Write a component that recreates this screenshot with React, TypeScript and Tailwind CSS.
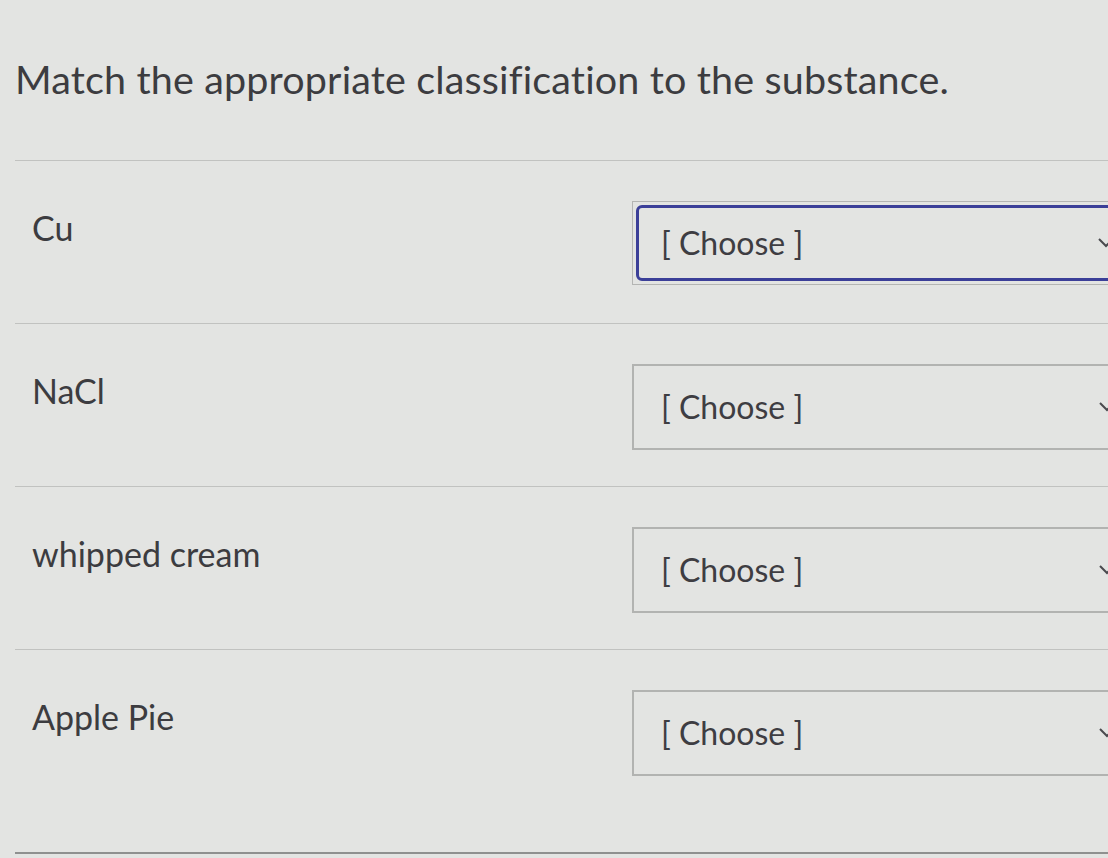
import React from 'react';

const rows = [
  { label: 'Cu', focused: true },
  { label: 'NaCl', focused: false },
  { label: 'whipped cream', focused: false },
  { label: 'Apple Pie', focused: false },
];

const Chevron = () => (
  <svg width="18" height="12" viewBox="0 0 18 12" fill="none" stroke="#4a4a4e" strokeWidth="2">
    <path d="M2 2l7 7 7-7" />
  </svg>
);

export default function App() {
  return (
    <div className="w-[1108px] h-[858px] overflow-hidden bg-[#e3e4e2] text-[#3c3c40] font-['Lato','Open_Sans',sans-serif]">
      <h1 className="pl-[15px] pt-[51px] text-[39.5px] leading-[56px] tracking-[0.15px]">
        Match the appropriate classification to the substance.
      </h1>
      <div className="ml-[15px] mt-[53px] w-[1200px]">
        {rows.map((r) => (
          <div key={r.label} className="flex items-start border-t border-[#c1c2c0] pt-[40px] pb-[38px] h-[163px]">
            <div className="w-[617px] pl-[17px] pt-[7px] text-[34px] leading-[40px]">{r.label}</div>
            {r.focused ? (
              <div className="w-[520px] border border-[#b4b5b3] p-[3px]">
                <div className="flex items-center justify-between h-[76px] border-[3px] border-[#3b3f98] rounded-[6px] pl-[22px] pr-[30px]">
                  <span className="text-[32px] leading-[40px] text-[#3e3d42]">[ Choose ]</span>
                  <Chevron />
                </div>
              </div>
            ) : (
              <div className="flex items-center justify-between w-[520px] h-[86px] border-2 border-[#b2b3b1] pl-[27px] pr-[34px]">
                <span className="text-[32px] leading-[40px] text-[#3e3d42]">[ Choose ]</span>
                <Chevron />
              </div>
            )}
          </div>
        ))}
        <div className="border-t-2 border-[#8f908f] mt-[40px]" />
      </div>
    </div>
  );
}
